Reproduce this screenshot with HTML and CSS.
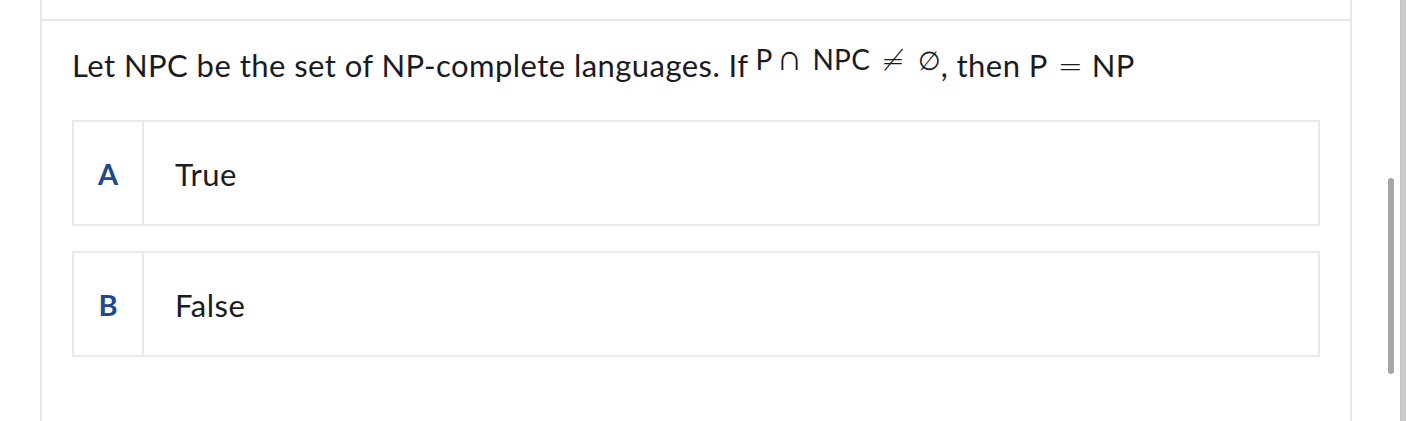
FILE: index.html
```html
<!DOCTYPE html>
<html lang="en">
<head>
<meta charset="utf-8">
<title>Question</title>
<link rel="stylesheet" href="styles.css">
</head>
<body>
<div class="page">
  <div class="main">
    <div class="card">
      <div class="card-top"></div>
      <div class="card-body">
        <p class="question">Let NPC be the set of NP-complete languages. If <span class="math raised"><span>P</span><span class="op">∩</span><span>NPC</span><span class="rel">≠</span><span class="empty">∅</span></span>, then <span class="math"><span>P</span><span class="rel eq">=</span><span>NP</span></span></p>
        <div class="options">
          <div class="option">
            <div class="letter">A</div>
            <div class="answer">True</div>
          </div>
          <div class="option">
            <div class="letter">B</div>
            <div class="answer">False</div>
          </div>
        </div>
      </div>
    </div>
  </div>
  <div class="rail"></div>
  <div class="thumb"></div>
</div>
</body>
</html>
```

FILE: styles.css
```css
html, body {
  margin: 0;
  padding: 0;
  background: #ffffff;
}
body {
  font-family: "Lato", "Open Sans", "Liberation Sans", sans-serif;
  color: #1b1b1f;
  overflow: hidden;
}
.page {
  position: relative;
  display: flex;
  width: 1406px;
  height: 421px;
  overflow: hidden;
}
.main {
  flex: 0 0 1400px;
  height: 421px;
}
.card {
  margin-left: 40px;
  width: 1308px;
  height: 421px;
  border-left: 2px solid #e8e8e8;
  border-right: 2px solid #e8e8e8;
}
.card-top {
  height: 19px;
  border-bottom: 2px solid #e8e8e8;
}
.card-body {
  padding: 0 30px;
}
.question {
  margin: 22px 0 0 0;
  font-size: 31px;
  line-height: 44px;
  white-space: nowrap;
  letter-spacing: 0.45px;
}
.math {
  letter-spacing: 0.3px;
}
.math.raised {
  position: relative;
  top: -7px;
  font-size: 28px;
  margin-left: -1px;
}
.op, .rel, .empty {
  font-family: "DejaVu Sans", sans-serif;
  font-weight: 300;
  letter-spacing: 0;
  line-height: 0;
}
.op {
  margin: 0 10px 0 4px;
  font-size: 36px;
}
.rel {
  margin: 0 13px 0 11px;
  font-size: 28px;
}
.rel.eq {
  margin: 0 9px 0 10px;
  font-size: 30px;
}
.empty {
  font-size: 26px;
}
.options {
  margin-top: 32px;
  display: flex;
  flex-direction: column;
  gap: 25px;
}
.option {
  display: flex;
  height: 102px;
  border: 2px solid #e9e9e9;
}
.letter {
  flex: 0 0 68px;
  display: flex;
  align-items: center;
  justify-content: center;
  border-right: 2px solid #e9e9e9;
  font-size: 29px;
  font-weight: 700;
  color: #1d4a8c;
}
.answer {
  display: flex;
  align-items: center;
  padding-left: 31px;
  font-size: 31px;
  letter-spacing: 0.5px;
  padding-top: 2px;
}
.rail {
  flex: 0 0 6px;
  height: 421px;
  background: #cbcbcb;
  border-left: 1px solid #c4c4c4;
  box-sizing: border-box;
}
.thumb {
  position: absolute;
  left: 1388px;
  top: 178px;
  width: 6px;
  height: 196px;
  border-radius: 3px;
  background: #a6a6a6;
}
```
